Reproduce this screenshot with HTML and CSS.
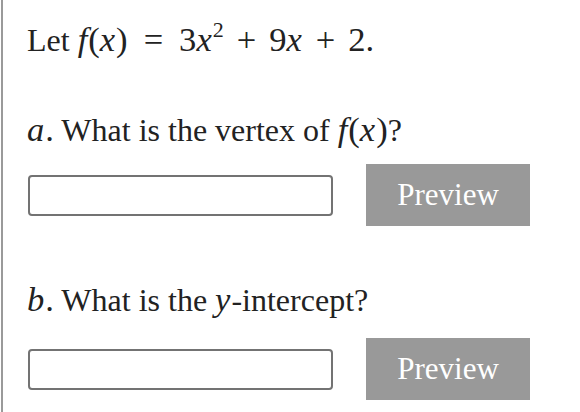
FILE: index.html
```html
<!DOCTYPE html>
<html lang="en">
<head>
    <meta charset="UTF-8">
    <title>Quadratic</title>
    <link rel="stylesheet" href="styles.css">
</head>
<body>
    <div class="problem">
        <p class="stmt">Let <span class="math"><i>f</i>(<i>x</i>)<span class="rel">=</span>3<i>x</i><sup>2</sup><span class="bin">+</span>9<i>x</i><span class="bin">+</span>2.</span></p>

        <div class="part">
            <p class="q"><span class="math"><i>a</i>.</span> What is the vertex of <span class="math"><i>f</i>(<i>x</i>)</span>?</p>
            <div class="answer">
                <input type="text" class="ans">
                <button class="preview">Preview</button>
            </div>
        </div>

        <div class="part">
            <p class="q"><span class="math"><i>b</i>.</span> What is the <span class="math"><i>y</i></span>-intercept?</p>
            <div class="answer">
                <input type="text" class="ans">
                <button class="preview">Preview</button>
            </div>
        </div>
    </div>
</body>
</html>
```

FILE: styles.css
```css
/* 기본 */
* {box-sizing: border-box;}
body {margin: 0; font-family: "Liberation Serif", "Times New Roman", serif; color: #222;}

/* 문제 박스 */
.problem {min-height: 412px; margin-left: 1px; padding: 22px 0 0 24px; border-left: 2px solid #9a9a9a;}
.stmt, .q {margin: 0; font-size: 32px; line-height: 36px;}
.stmt {margin-bottom: 54px;}
.q {margin-bottom: 16px;}
.part + .part {margin-top: 56px;}
.part + .part .q {margin-bottom: 20px;}

/* 수식 */
.math {font-size: 1.08em; line-height: 0;}
.math i {font-style: italic; margin-right: 1px;}
.math sup {font-size: 22px; line-height: 0; vertical-align: 14px;}
.rel {margin: 0 16px;}
.bin {margin: 0 13px;}

/* 답 입력 */
.answer {display: flex; align-items: center; gap: 33px;}
.ans {width: 305px; height: 41px; margin-left: 1px; border: 2px solid #737373; border-radius: 4px; background: #fff;}
.preview {width: 164px; height: 62px; border: none; background: #999; color: #fff; font-family: inherit; font-size: 31px;}
```
